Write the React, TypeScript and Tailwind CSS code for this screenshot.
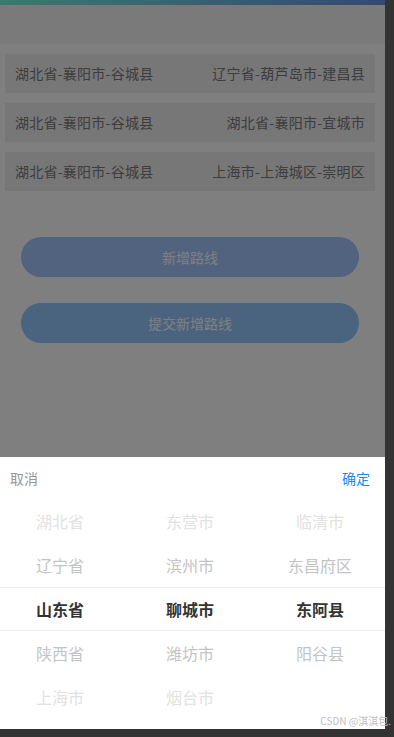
const routes = [
  { from: "湖北省-襄阳市-谷城县", to: "辽宁省-葫芦岛市-建昌县" },
  { from: "湖北省-襄阳市-谷城县", to: "湖北省-襄阳市-宜城市" },
  { from: "湖北省-襄阳市-谷城县", to: "上海市-上海城区-崇明区" },
];

const columns = [
  ["湖北省", "辽宁省", "山东省", "陕西省", "上海市"],
  ["东营市", "滨州市", "聊城市", "潍坊市", "烟台市"],
  ["临清市", "东昌府区", "东阿县", "阳谷县", ""],
];

const rowStyles = [
  "text-[#e2e2e2]",
  "text-[#c4c4c4]",
  "text-[#333333] font-bold",
  "text-[#c4c4c4]",
  "text-[#e2e2e2]",
];

export default function App() {
  return (
    <div
      className="relative w-[394px] h-[737px] bg-[#333333]"
      style={{ fontFamily: '"Noto Sans CJK SC", "Noto Sans", sans-serif' }}
    >
      <div className="relative w-[385px] h-[729px] bg-white overflow-hidden">
        <div className="h-[5px] bg-gradient-to-r from-[#74f4dc] to-[#6a92e6]" />
        <div className="h-[39px] bg-[#f4f4f4]" />

        <div className="flex flex-col ml-[5px] mr-[10px]">
          {routes.map((r, i) => (
            <div
              key={i}
              className="mt-[10px] h-[39px] flex items-center justify-between px-[10px] bg-[#eeeeee] text-[14px] tracking-[0.25px] text-[#7a7a7a]"
            >
              <span>{r.from}</span>
              <span>{r.to}</span>
            </div>
          ))}
        </div>

        <div className="mt-[46px] ml-[21px] w-[338px] flex flex-col gap-[26px]">
          <button className="h-[40px] rounded-full bg-[#a4c6fe] text-white text-[14px]">
            新增路线
          </button>
          <button className="h-[40px] rounded-full bg-[#94c8ff] text-white text-[14px]">
            提交新增路线
          </button>
        </div>

        <div className="absolute inset-0 bg-black/50" />

        <div className="absolute left-0 right-0 bottom-0 h-[272px] bg-white">
          <div className="h-[42px] flex items-center justify-between pl-[10px] pr-[15px] text-[14px]">
            <span className="text-[#969799]">取消</span>
            <span className="text-[#1989fa]">确定</span>
          </div>
          <div className="relative">
            <div className="-ml-[5px] w-[390px] grid grid-cols-3">
              {columns.map((col, c) => (
                <div key={c} className="flex flex-col">
                  {col.map((item, r) => (
                    <div
                      key={r}
                      className={`h-[44px] flex items-center justify-center text-[16px] ${rowStyles[r]}`}
                    >
                      {item}
                    </div>
                  ))}
                </div>
              ))}
            </div>
            <div className="absolute left-0 right-0 top-[88px] h-[44px] border-y border-[#ebedf0] pointer-events-none" />
          </div>
        </div>
      </div>

      <span className="absolute right-[3px] bottom-[9px] text-[10px] text-[#c0c0c0]">
        CSDN @淇淇包.
      </span>
    </div>
  );
}
